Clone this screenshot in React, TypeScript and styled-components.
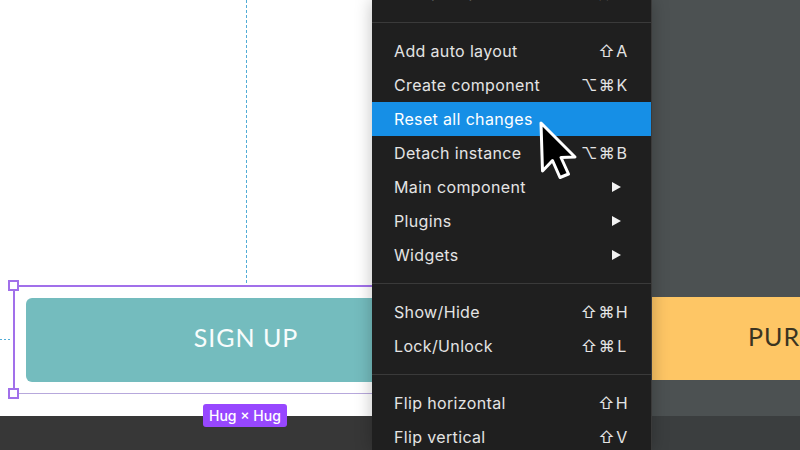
import React from 'react';
import styled, { createGlobalStyle } from 'styled-components';

const GlobalStyle = createGlobalStyle`
  html, body {
    margin: 0;
    padding: 0;
    background: #373737;
    overflow: hidden;
  }
  * {
    box-sizing: border-box;
  }
`;

type MenuEntry =
  | { kind: 'item'; label: string; keys?: string[]; submenu?: boolean; active?: boolean }
  | { kind: 'sep' };

const entries: MenuEntry[] = [
  { kind: 'item', label: 'Use as mask', keys: ['⌃', '⌘', 'M'] },
  { kind: 'sep' },
  { kind: 'item', label: 'Add auto layout', keys: ['⇧', 'A'] },
  { kind: 'item', label: 'Create component', keys: ['⌥', '⌘', 'K'] },
  { kind: 'item', label: 'Reset all changes', active: true },
  { kind: 'item', label: 'Detach instance', keys: ['⌥', '⌘', 'B'] },
  { kind: 'item', label: 'Main component', submenu: true },
  { kind: 'item', label: 'Plugins', submenu: true },
  { kind: 'item', label: 'Widgets', submenu: true },
  { kind: 'sep' },
  { kind: 'item', label: 'Show/Hide', keys: ['⇧', '⌘', 'H'] },
  { kind: 'item', label: 'Lock/Unlock', keys: ['⇧', '⌘', 'L'] },
  { kind: 'sep' },
  { kind: 'item', label: 'Flip horizontal', keys: ['⇧', 'H'] },
  { kind: 'item', label: 'Flip vertical', keys: ['⇧', 'V'] },
];

export default function App() {
  return (
    <>
      <GlobalStyle />
      <Screen>
        <CanvasColumn>
          <Artboard>
            <Guide />
            <Selection>
              <Handle $edge="top" />
              <Handle $edge="bottom" />
              <SpacingMark />
              <SignUpButton>SIGN UP</SignUpButton>
              <SizeBadge>Hug × Hug</SizeBadge>
            </Selection>
          </Artboard>
          <CanvasFloor />
        </CanvasColumn>

        <Menu>
          <MenuList>
            {entries.map((entry, i) =>
              entry.kind === 'sep' ? (
                <Separator key={i} />
              ) : (
                <MenuItem key={i} $active={entry.active}>
                  <span>{entry.label}</span>
                  {entry.keys && (
                    <Shortcut>
                      {entry.keys.map((k, j) => (
                        <KeyGlyph key={j}>{k}</KeyGlyph>
                      ))}
                    </Shortcut>
                  )}
                  {entry.submenu && <SubmenuArrow />}
                </MenuItem>
              )
            )}
          </MenuList>
        </Menu>

        <SideColumn>
          <SideStage>
            <PurchaseButton>PURCHASE</PurchaseButton>
          </SideStage>
          <SideFloor />
        </SideColumn>

        <Cursor viewBox="0 0 40 60" width="40" height="60">
          <path
            d="M2 2 L3.5 50 L13.5 39.5 L21 56.5 L29.5 53 L22 36.5 L36 36 Z"
            fill="#000"
            stroke="#fff"
            strokeWidth="3"
            strokeLinejoin="round"
          />
        </Cursor>
      </Screen>
    </>
  );
}

const Screen = styled.div`
  position: relative;
  display: grid;
  grid-template-columns: 372px 280px 1fr;
  width: 800px;
  height: 450px;
  overflow: hidden;
  font-family: Inter, 'DejaVu Sans', sans-serif;
`;

const CanvasColumn = styled.div`
  display: flex;
  flex-direction: column;
  overflow: hidden;
`;

const Artboard = styled.div`
  position: relative;
  height: 416px;
  padding-left: 13px;
  background: #ffffff;
`;

const Guide = styled.div`
  width: 1px;
  height: 285px;
  margin-left: 233px;
  background: repeating-linear-gradient(to bottom, #52acd6 0 3px, transparent 3px 5px);
`;

const Selection = styled.div`
  position: relative;
  width: 720px;
  padding: 11px 0 11px 11px;
  border-top: 2px solid #a170ea;
  border-left: 2px solid #a170ea;
  border-bottom: 1px solid #b7a8dc;
`;

const Handle = styled.div<{ $edge: 'top' | 'bottom' }>`
  position: absolute;
  left: -7px;
  ${(p) => (p.$edge === 'top' ? 'top: -7px;' : 'bottom: -6px;')}
  width: 11px;
  height: 11px;
  background: #ffffff;
  border: 2px solid #a170ea;
`;

const SpacingMark = styled.div`
  position: absolute;
  left: -15px;
  top: 52px;
  width: 11px;
  height: 1px;
  background: repeating-linear-gradient(to right, #52acd6 0 2px, transparent 2px 4px);
`;

const SignUpButton = styled.div`
  display: flex;
  align-items: center;
  justify-content: center;
  width: 440px;
  height: 84px;
  padding-bottom: 6px;
  border-radius: 6px;
  background: #74bcbe;
  color: #f8fcfc;
  font-family: Lato, 'Noto Sans', sans-serif;
  font-size: 25px;
  letter-spacing: 1px;
`;

const SizeBadge = styled.div`
  position: absolute;
  left: 188px;
  top: calc(100% + 11px);
  height: 23px;
  padding: 0 6px;
  display: flex;
  align-items: center;
  border-radius: 3px;
  background: #9747ff;
  color: #ffffff;
  font-size: 14px;
  font-weight: 500;
  white-space: nowrap;
`;

const CanvasFloor = styled.div`
  flex: 1;
  background: #373737;
`;

const Menu = styled.div`
  position: relative;
  z-index: 2;
  overflow: hidden;
  background: #1f1f1f;
  border-right: 1px solid #3a3a3a;
  box-shadow: 0 0 16px rgba(0, 0, 0, 0.25);
`;

const MenuList = styled.div`
  margin-top: -23px;
  display: flex;
  flex-direction: column;
`;

const MenuItem = styled.div<{ $active?: boolean }>`
  display: flex;
  align-items: center;
  justify-content: space-between;
  height: 34px;
  padding: 0 23px 0 22px;
  font-size: 16px;
  letter-spacing: 0.35px;
  color: ${(p) => (p.$active ? '#ffffff' : '#e4e4e4')};
  background: ${(p) => (p.$active ? '#168fe6' : 'transparent')};
  white-space: nowrap;
`;

const Separator = styled.div`
  height: 23px;
  display: flex;
  align-items: center;

  &::after {
    content: '';
    flex: 1;
    height: 1px;
    background: #3a3a3a;
  }
`;

const Shortcut = styled.span`
  display: flex;
  align-items: center;
  gap: 1px;
`;

const KeyGlyph = styled.span`
  display: inline-block;
  min-width: 12px;
  text-align: center;
  font-size: 16px;
`;

const SubmenuArrow = styled.span`
  width: 0;
  height: 0;
  margin-right: 7px;
  border-top: 5.5px solid transparent;
  border-bottom: 5.5px solid transparent;
  border-left: 9px solid #f2f2f2;
`;

const SideColumn = styled.div`
  display: flex;
  flex-direction: column;
  overflow: hidden;
`;

const SideStage = styled.div`
  height: 416px;
  padding-top: 297px;
  background: #4c5152;
`;

const PurchaseButton = styled.div`
  display: flex;
  align-items: center;
  height: 83px;
  padding-left: 96px;
  padding-bottom: 6px;
  background: #fec665;
  color: #3b3421;
  font-family: Lato, 'Noto Sans', sans-serif;
  font-size: 25px;
  letter-spacing: 1px;
  white-space: nowrap;
`;

const SideFloor = styled.div`
  flex: 1;
  background: #3b3e3f;
`;

const Cursor = styled.svg`
  position: absolute;
  left: 539px;
  top: 121px;
  z-index: 3;
`;
